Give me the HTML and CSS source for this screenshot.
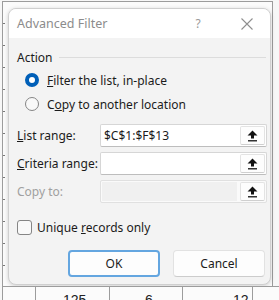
FILE: index.html
```html
<!DOCTYPE html>
<html>
    <head>
        <title>Advanced Filter</title>
        <link rel="stylesheet" href="styles.css">
    </head>
    <body>
        <div class="sheet">
            <div class="dialog">
                <div class="titlebar">
                    <span class="title">Advanced Filter</span>
                    <span class="help">?</span>
                    <span class="close">
                        <svg width="12" height="12" viewBox="0 0 12 12"><path d="M0.5 0.5 L11.5 11.5 M11.5 0.5 L0.5 11.5" stroke="#8f8f8f" stroke-width="1.1" fill="none"/></svg>
                    </span>
                </div>
                <div class="content">
                    <div class="group-head">
                        <span>Action</span>
                        <div class="rule"></div>
                    </div>
                    <div class="radio-row">
                        <span class="radio on"></span>
                        <span><u>F</u>ilter the list, in-place</span>
                    </div>
                    <div class="radio-row">
                        <span class="radio"></span>
                        <span>C<u>o</u>py to another location</span>
                    </div>
                    <div class="field first">
                        <span class="field-label"><u>L</u>ist range:</span>
                        <div class="ref">
                            <span class="ref-text">$C$1:$F$13</span>
                            <span class="ref-btn"><svg width="11" height="12" viewBox="0 0 11 12"><path d="M5.5 0.5 L10.5 5.5 L7 5.5 L7 8.5 L4 8.5 L4 5.5 L0.5 5.5 Z" fill="#111"/><rect x="1" y="10" width="9" height="1.5" fill="#333"/></svg></span>
                        </div>
                    </div>
                    <div class="field">
                        <span class="field-label"><u>C</u>riteria range:</span>
                        <div class="ref">
                            <span class="ref-text"></span>
                            <span class="ref-btn"><svg width="11" height="12" viewBox="0 0 11 12"><path d="M5.5 0.5 L10.5 5.5 L7 5.5 L7 8.5 L4 8.5 L4 5.5 L0.5 5.5 Z" fill="#111"/><rect x="1" y="10" width="9" height="1.5" fill="#333"/></svg></span>
                        </div>
                    </div>
                    <div class="field">
                        <span class="field-label disabled">Copy to:</span>
                        <div class="ref off">
                            <span class="ref-text"></span>
                            <span class="ref-btn"><svg width="11" height="12" viewBox="0 0 11 12"><path d="M5.5 0.5 L10.5 5.5 L7 5.5 L7 8.5 L4 8.5 L4 5.5 L0.5 5.5 Z" fill="#111"/><rect x="1" y="10" width="9" height="1.5" fill="#333"/></svg></span>
                        </div>
                    </div>
                    <div class="check-row">
                        <span class="check"></span>
                        <span>Unique <u>r</u>ecords only</span>
                    </div>
                    <div class="buttons">
                        <button class="btn default">OK</button>
                        <button class="btn">Cancel</button>
                    </div>
                </div>
            </div>
        </div>
        <div class="cells">
            <div class="cell c1"></div>
            <div class="cell c2">125</div>
            <div class="cell c3">6</div>
            <div class="cell c4">12</div>
            <div class="cell c5"></div>
        </div>
    </body>
</html>
```

FILE: styles.css
```css
body{
    margin: 0;
    width: 279px;
    height: 300px;
    overflow: hidden;
    background-color: #f7f7f7;
    font-family: "Noto Sans", "Open Sans", sans-serif;
    font-size: 12px;
    color: #1b1b1b;
}
.sheet{
    margin: 1px 0 0 2px;
    width: 271px;
    height: 285px;
    border-left: 1px solid #9c9c9c;
    border-top: 1px solid #9c9c9c;
    border-right: 1px solid #9c9c9c;
    padding: 6px 0 0 5px;
    box-sizing: border-box;
    background-color: #fbfbfb;
    /* sheet gridlines peeking out beside the dialog */
    background-image: repeating-linear-gradient(to bottom, transparent 0 21px, #7a7a7a 21px 22px);
    background-size: 2px 100%;
    background-repeat: no-repeat;
}
.dialog{
    width: 263px;
    height: 277px;
    box-sizing: border-box;
    border: 1px solid #cfcfcf;
    border-radius: 8px;
    background-color: #f3f3f3;
    box-shadow: 0 1px 4px rgba(0, 0, 0, 0.18);
    display: flex;
    flex-direction: column;
    overflow: hidden;
}
.titlebar{
    height: 29px;
    background-color: #ffffff;
    display: flex;
    align-items: center;
    padding-left: 8px;
}
.title{
    flex: 1;
    color: #8c8c8c;
    font-size: 12.5px;
}
.help{
    width: 20px;
    text-align: center;
    color: #9a9a9a;
    margin-right: 33px;
}
.close{
    display: flex;
    margin-right: 17px;
}
.content{
    flex: 1;
    display: flex;
    flex-direction: column;
    padding: 11px 3px 0 8px;
}
.group-head{
    height: 16px;
    display: flex;
    align-items: center;
}
.rule{
    flex: 1;
    height: 1px;
    background-color: #dcdcdc;
    margin: 0 1px 0 6px;
}
.radio-row{
    height: 24px;
    display: flex;
    align-items: center;
    padding-left: 8px;
}
.group-head + .radio-row{
    margin-top: 3px;
}
.radio{
    width: 14px;
    height: 14px;
    box-sizing: border-box;
    border-radius: 50%;
    border: 1px solid #858585;
    background-color: #f9f9f9;
    margin-right: 8px;
}
.radio.on{
    border: 4px solid #005fb8;
    background-color: #ffffff;
}
.field{
    height: 23px;
    display: flex;
    align-items: center;
    margin-top: 5px;
}
.field.first{
    margin-top: 8px;
}
.field-label{
    width: 83px;
}
.disabled{
    color: #a0a0a0;
}
.ref{
    flex: 1;
    height: 23px;
    box-sizing: border-box;
    border: 1px solid #d6d6d6;
    border-bottom-color: #bdbdbd;
    border-radius: 2px;
    background-color: #ffffff;
    display: flex;
    align-items: center;
    padding-right: 1px;
}
.ref.off{
    background-color: #fafafa;
    border-color: #e0e0e0;
}
.ref.off .ref-text{
    background-color: #f0f0f0;
    align-self: stretch;
    margin: 1px 3px 1px 1px;
}
.ref-text{
    flex: 1;
    padding-left: 3px;
}
.ref-btn{
    width: 25px;
    height: 19px;
    box-sizing: border-box;
    border: 1px solid #e3e3e3;
    border-bottom-color: #cfcfcf;
    border-radius: 2px;
    background-color: #fdfdfd;
    display: flex;
    align-items: center;
    justify-content: center;
}
.check-row{
    height: 16px;
    display: flex;
    align-items: center;
    margin-top: 16px;
}
.check{
    width: 15px;
    height: 15px;
    box-sizing: border-box;
    border: 1px solid #858585;
    border-radius: 3px;
    background-color: #f9f9f9;
    margin-right: 5px;
}
.buttons{
    display: flex;
    justify-content: flex-end;
    gap: 13px;
    margin-top: 15px;
    margin-right: 2px;
}
.btn{
    width: 92px;
    height: 27px;
    font-family: "Noto Sans", "Open Sans", sans-serif;
    font-size: 12px;
    color: #1b1b1b;
    background-color: #fdfdfd;
    border: 1px solid #e2e2e2;
    border-bottom-color: #cccccc;
    border-radius: 4px;
    padding: 0;
}
.btn.default{
    border: 2px solid #64a6e0;
}
.cells{
    display: flex;
    height: 15px;
    border-top: 1px solid #9c9c9c;
    margin-left: 2px;
    background-color: #fbfbfb;
}
.cell{
    border-left: 1px solid #9c9c9c;
    font-family: "Liberation Sans", sans-serif;
    font-size: 14px;
    line-height: 14px;
    padding-top: 6px;
    color: #222;
}
.c1{ width: 32px; }
.c2{ width: 74px; padding-left: 27px; box-sizing: border-box; }
.c3{ width: 73px; padding-left: 35px; box-sizing: border-box; }
.c4{ width: 70px; padding-left: 50px; box-sizing: border-box; }
.c5{ flex: 1; }
```
